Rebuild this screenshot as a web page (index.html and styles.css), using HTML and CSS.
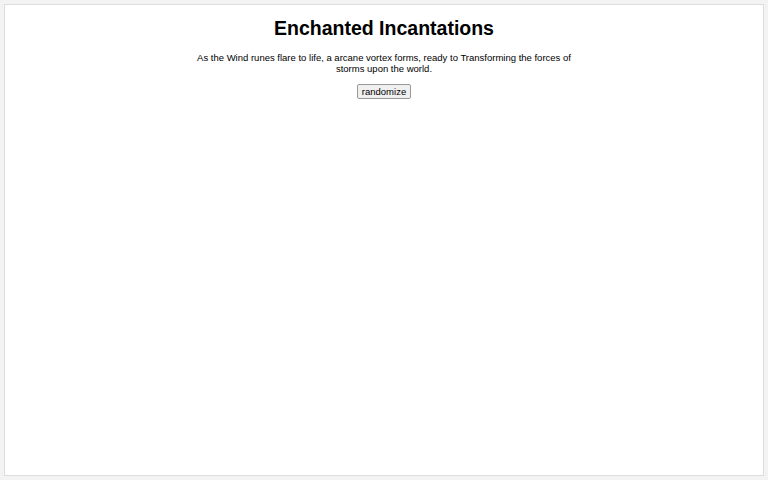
FILE: index.html
```html
<!DOCTYPE html>
<html lang="en">
<head>
	<meta charset="utf-8" />
	<title>Enchanted Incantations</title>
	<link rel="stylesheet" href="styles.css">
</head>
<body>
	<main class="panel">
		<h1>Enchanted Incantations</h1>
		<p class="spell">As the Wind runes flare to life, a arcane vortex forms, ready to Transforming the forces of storms upon the world.</p>
		<button class="randomize">randomize</button>
	</main>
</body>
</html>
```

FILE: styles.css
```css
html { font-family: "Liberation Sans", Arial, sans-serif; background-color: #f3f3f3; }
body { margin: 4px; }
.panel {
	box-sizing: border-box;
	height: 472px;
	background-color: #fff;
	border: 1px solid #dcdcdc;
	text-align: center;
	padding: 12px 1rem;
}
h1 {
	font-size: 19.5px;
	margin: 0 0 12px;
	color: #000;
}
.spell {
	font-size: 9.5px;
	line-height: 11px;
	max-width: 380px;
	margin: 0 auto 7px;
}
.randomize {
	font-family: inherit;
	font-size: 9.5px;
	padding: 1px 4px;
	border: 1px solid #999;
	border-radius: 2px;
	background-color: #f0f0f0;
}
```
